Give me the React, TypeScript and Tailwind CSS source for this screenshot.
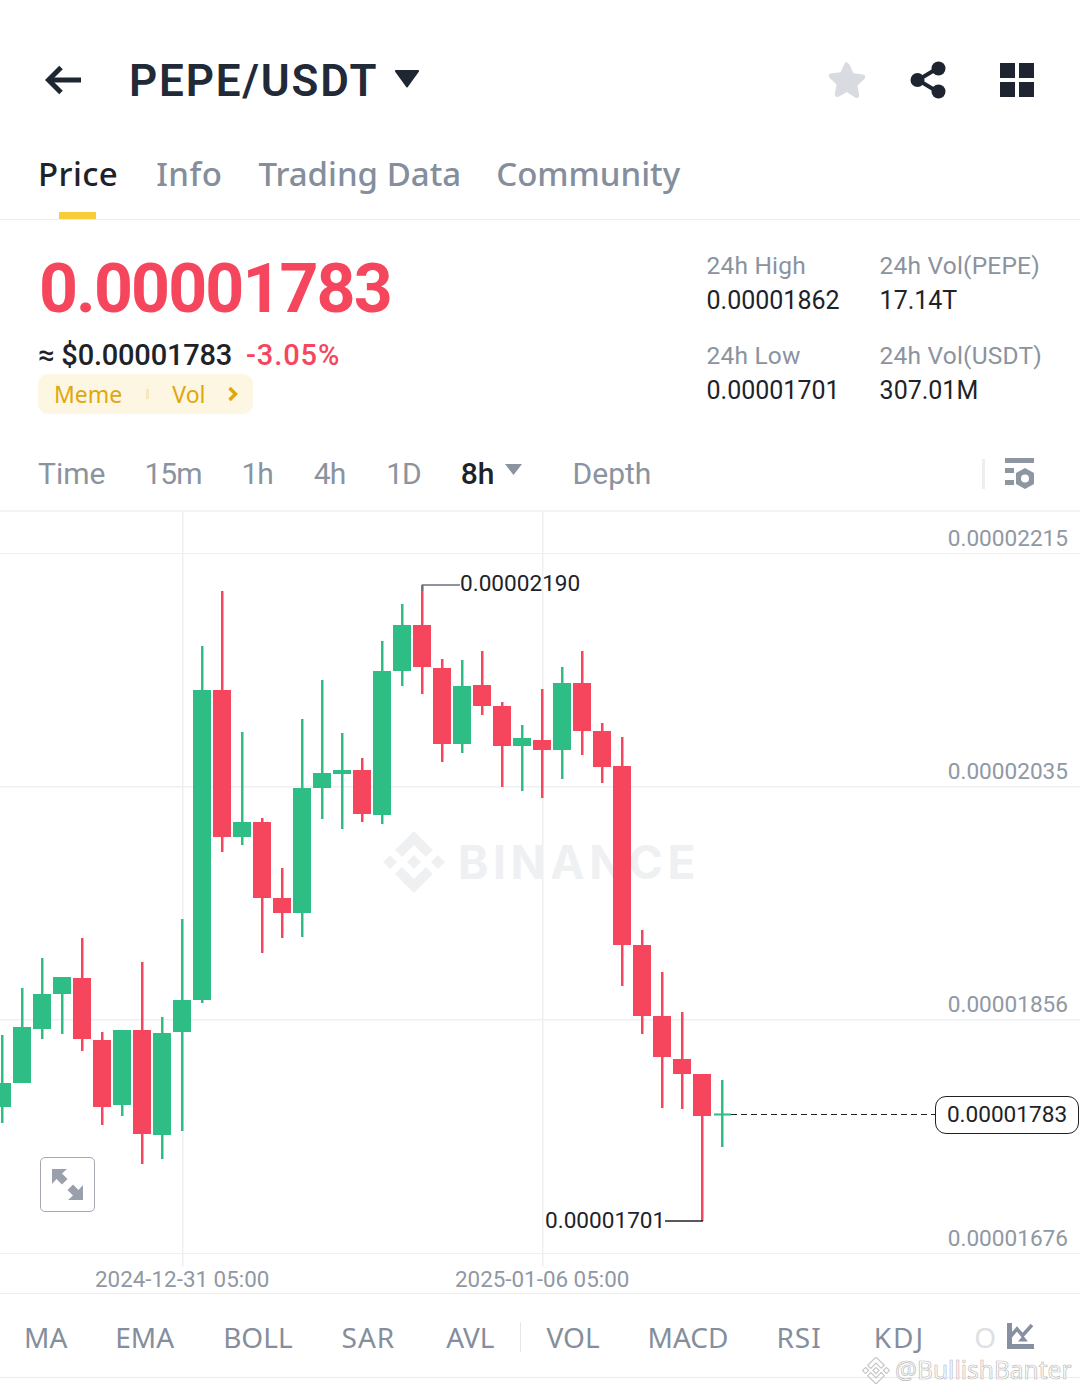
type Candle = [number, "g" | "r", number, number, number, number];

// x, colour, wick top, wick bottom, body top, body bottom (page pixels)
const candles: Candle[] = [
  [2, "g", 1035, 1123, 1083, 1107],
  [22, "g", 988, 1083, 1027, 1083],
  [42, "g", 958, 1039, 994, 1029],
  [62, "g", 977, 1034, 977, 994],
  [82, "r", 938, 1051, 978, 1039],
  [102, "r", 1032, 1125, 1040, 1107],
  [122, "g", 1030, 1116, 1030, 1105],
  [142, "r", 962, 1164, 1030, 1134],
  [162, "g", 1017, 1159, 1033, 1135],
  [182, "g", 919, 1131, 1000, 1032],
  [202, "g", 646, 1003, 690, 1000],
  [222, "r", 591, 852, 690, 837],
  [242, "g", 732, 845, 822, 837],
  [262, "r", 818, 953, 822, 898],
  [282, "r", 868, 938, 898, 913],
  [302, "g", 719, 937, 788, 913],
  [322, "g", 680, 819, 773, 788],
  [342, "g", 733, 829, 770, 774],
  [362, "r", 758, 822, 770, 814],
  [382, "g", 641, 824, 671, 815],
  [402, "g", 604, 686, 625, 671],
  [422, "r", 585, 694, 625, 667],
  [442, "r", 659, 762, 668, 744],
  [462, "g", 660, 753, 686, 744],
  [482, "r", 651, 715, 685, 706],
  [502, "r", 702, 787, 706, 746],
  [522, "g", 725, 791, 738, 746],
  [542, "r", 689, 798, 740, 750],
  [562, "g", 667, 779, 683, 750],
  [582, "r", 651, 755, 683, 731],
  [602, "r", 723, 783, 731, 767],
  [622, "r", 737, 986, 766, 945],
  [642, "r", 930, 1034, 945, 1016],
  [662, "r", 972, 1108, 1016, 1057],
  [682, "r", 1012, 1109, 1059, 1074],
  [702, "r", 1074, 1221, 1074, 1116],
];

const binancePath =
  "M16.624 13.9202l2.7175 2.7154-7.353 7.353-7.353-7.352 2.7175-2.7164 4.6355 4.6595 4.6356-4.6595zm4.6366-4.6366L24 12l-2.7154 2.7164L18.5682 12l2.6924-2.7164zm-9.272.001l2.7163 2.6914-2.7164 2.7174v-.001L9.2721 12l2.7164-2.7154zm-9.2722-.001L5.4088 12l-2.6914 2.6924L0 12l2.7164-2.7164zM11.9885.0115l7.353 7.329-2.7174 2.7154-4.6356-4.6356-4.6355 4.6595-2.7174-2.7154 7.353-7.353z";

const axisLabels = [
  { text: "0.00002215", top: "top-[13px]" },
  { text: "0.00002035", top: "top-[246px]" },
  { text: "0.00001856", top: "top-[479px]" },
  { text: "0.00001676", top: "top-[713px]" },
];

const Header = () => (
  <div className="flex h-[120px] items-center pt-[40px] pl-[45px]">
    <svg width="37" height="30" viewBox="0 0 37 30" fill="none" stroke="#1e2632" strokeWidth="5">
      <path d="M36 15H4" />
      <path d="M16 2.5 3.5 15 16 27.5" />
    </svg>
    <span className="mt-[2px] ml-[47px] font-['Roboto',sans-serif] text-[44px] leading-none font-semibold tracking-[1.8px] text-[#222a38]">PEPE/USDT</span>
    <svg className="mt-[-3px] ml-[17px]" width="24" height="18" viewBox="0 0 24 18" fill="#1e2632">
      <path d="M1 0h22a1 1 0 0 1 1 1.5L12.8 17a1 1 0 0 1-1.6 0L0 1.5A1 1 0 0 1 1 0z" />
    </svg>
    <div className="ml-auto flex items-center pr-[46px]">
      <svg width="38" height="38" viewBox="0 0 24 24" fill="#d8dbe0">
        <path d="M12 1.2c.7 0 1.2.4 1.5 1l2.6 5.6 6 .8c1.4.2 1.9 1.8.9 2.7l-4.4 4.2 1.1 6c.2 1.4-1.2 2.4-2.4 1.7L12 19.6l-5.3 2.9c-1.2.7-2.6-.3-2.4-1.7l1.1-6-4.4-4.2c-1-.9-.5-2.5.9-2.7l6-.8 2.6-5.6c.3-.6.8-1 1.5-1z" />
      </svg>
      <svg className="ml-[44px]" width="38" height="38" viewBox="0 0 38 38" fill="#1e2530" stroke="#1e2530">
        <path d="M28 7 8 19l20 12" fill="none" strokeWidth="4" />
        <circle cx="28.5" cy="7.5" r="7" stroke="none" />
        <circle cx="7.5" cy="19" r="7" stroke="none" />
        <circle cx="28.5" cy="30.5" r="7" stroke="none" />
      </svg>
      <div className="ml-[52px] grid grid-cols-[15px_15px] grid-rows-[15px_15px] gap-[4px]">
        <div className="bg-[#1e2530]" />
        <div className="bg-[#1e2530]" />
        <div className="bg-[#1e2530]" />
        <div className="bg-[#1e2530]" />
      </div>
    </div>
  </div>
);

const Tabs = () => (
  <div className="flex h-[100px] border-b border-[#eaecef] pl-[38px] font-['Noto_Sans',sans-serif] text-[33px] leading-none text-[#848e9c]">
    <div className="flex flex-col">
      <span className="mt-[37px] font-medium tracking-[0.4px] text-[#1e2329]">Price</span>
      <div className="mt-auto ml-[21px] h-[7px] w-[37px] bg-[#f7cd3a]" />
    </div>
    <span className="mt-[37px] ml-[38px] font-medium tracking-[0.5px]">Info</span>
    <span className="mt-[37px] ml-[36px] font-medium">Trading Data</span>
    <span className="mt-[37px] ml-[35px] font-medium">Community</span>
  </div>
);

const Stat = ({ label, value }: { label: string; value: string }) => (
  <div className="flex flex-col gap-[9px]">
    <span className="text-[24.5px] leading-[26px] tracking-[0.2px] text-[#8b939f]">{label}</span>
    <span className="text-[25px] leading-[26px] text-[#1e2329]">{value}</span>
  </div>
);

const Summary = () => (
  <div className="flex h-[220px] justify-between font-['Roboto',sans-serif]">
    <div className="flex flex-col pl-[38px]">
      <span className="mt-[32px] ml-[1px] text-[68px] leading-[74px] font-bold tracking-[-1.9px] text-[#f6465d]">0.00001783</span>
      <div className="mt-[11px] flex h-[36px] items-center gap-[14px] text-[29px] leading-none font-medium">
        <span className="tracking-[-0.2px] text-[#1e2329]">≈ $0.00001783</span>
        <span className="tracking-[0.9px] text-[#f6465d]">-3.05%</span>
      </div>
      <div className="mt-[1px] flex h-[40px] w-[215px] items-center rounded-[10px] bg-[#fdf6e3] pl-[16px] font-['Noto_Sans',sans-serif] text-[23px] text-[#e0a70c]">
        <span>Meme</span>
        <div className="ml-[24px] h-[10px] w-[3px] bg-[#f6e7bd]" />
        <span className="ml-[23px]">Vol</span>
        <svg className="ml-[21px]" width="12" height="16" viewBox="0 0 12 16" fill="none" stroke="#e0a70c" strokeWidth="3.5">
          <path d="M2.5 2 8.5 8l-6 6" />
        </svg>
      </div>
    </div>
    <div className="flex gap-[40px] pt-[33px] pr-[38px]">
      <div className="flex flex-col gap-[29px]">
        <Stat label="24h High" value="0.00001862" />
        <Stat label="24h Low" value="0.00001701" />
      </div>
      <div className="flex flex-col gap-[29px]">
        <Stat label="24h Vol(PEPE)" value="17.14T" />
        <Stat label="24h Vol(USDT)" value="307.01M" />
      </div>
    </div>
  </div>
);

const Periods = () => (
  <div className="flex h-[72px] items-center border-b-[2px] border-[#f3f4f5] pr-[45px] pb-[3px] pl-[38px] font-['Roboto',sans-serif] text-[30px] leading-none text-[#8b939f]">
    <span>Time</span>
    <span className="ml-[39px] tracking-[-1px]">15m</span>
    <span className="ml-[40px] tracking-[-1px]">1h</span>
    <span className="ml-[41px] tracking-[-1px]">4h</span>
    <span className="ml-[41px] tracking-[-1px]">1D</span>
    <span className="ml-[40px] font-medium text-[#1e2329]">8h</span>
    <svg className="mt-[-8px] ml-[10px]" width="17" height="11" viewBox="0 0 17 11" fill="#8b939f">
      <path d="M0 0h17L8.5 11z" />
    </svg>
    <span className="ml-[51px]">Depth</span>
    <div className="ml-auto h-[30px] w-[3px] bg-[#eceef0]" />
    <svg className="ml-[20px]" width="30" height="31" viewBox="0 0 30 31" fill="#8e96a2">
      <path d="M0 0h29v5H0zM0 10h9v5H0zM0 22h9v5H0z" />
      <path fillRule="evenodd" d="M20 10l9 5v11l-9 5-9-5V15zm0 6.5a4 4 0 1 0 0 8 4 4 0 0 0 0-8z" />
    </svg>
  </div>
);

const Chart = () => (
  <div className="relative h-[782px] border-b border-[#eaecef] font-['Roboto',sans-serif]">
    <div className="absolute top-[319px] left-[383px] flex items-center gap-[13px]">
      <svg width="62" height="62" viewBox="0 0 24 24" fill="#eef0f2">
        <path d={binancePath} />
      </svg>
      <span className="font-['Inter',sans-serif] text-[46px] leading-none font-bold tracking-[4.6px] text-[#eef0f2]">BINANCE</span>
    </div>
    <svg className="absolute inset-0" width="1080" height="781" viewBox="0 512 1080 781">
      <g fill="#eef0f2">
        <rect x="0" y="553" width="1080" height="1" />
        <rect x="0" y="786" width="1080" height="1.5" />
        <rect x="0" y="1019" width="1080" height="1.5" />
        <rect x="0" y="1253" width="1080" height="1" />
        <rect x="182" y="512" width="1.5" height="755" />
        <rect x="542" y="512" width="1.5" height="755" />
      </g>
      {candles.map(([x, c, wt, wb, bt, bb]) => (
        <g key={x} fill={c === "g" ? "#2ebd85" : "#f6465d"}>
          <rect x={x - 1} y={wt} width="2.5" height={wb - wt} />
          <rect x={x - 9} y={bt} width="18" height={bb - bt} />
        </g>
      ))}
      <rect x="721" y="1080" width="2.5" height="67" fill="#2ebd85" />
      <rect x="714" y="1113.5" width="17" height="2" fill="#2ebd85" />
      <path d="M731 1114.5H935" stroke="#1e2329" strokeWidth="1.2" strokeDasharray="6 4" />
      <path d="M422.5 591V585H460" fill="none" stroke="#6c727c" strokeWidth="1.5" />
      <path d="M665 1221H703" fill="none" stroke="#1e2329" strokeWidth="1.5" />
    </svg>
    {axisLabels.map((label) => (
      <span key={label.text} className={`absolute right-[12px] ${label.top} text-[22.6px] leading-[27px] text-[#8f98a4]`}>
        {label.text}
      </span>
    ))}
    <span className="absolute top-[58px] left-[460px] text-[22.6px] leading-[27px] text-[#1e2329]">0.00002190</span>
    <span className="absolute top-[695px] left-[545px] text-[22.6px] leading-[27px] text-[#1e2329]">0.00001701</span>
    <div className="absolute top-[584px] left-[935px] flex h-[38px] w-[144px] items-center justify-center rounded-[11px] border border-[#1e2329] bg-white text-[22.6px] leading-none text-[#1e2329]">
      0.00001783
    </div>
    <span className="absolute top-[754px] left-[95px] text-[22.4px] leading-[27px] text-[#8f98a4]">2024-12-31 05:00</span>
    <span className="absolute top-[754px] left-[455px] text-[22.4px] leading-[27px] text-[#8f98a4]">2025-01-06 05:00</span>
    <div className="absolute top-[645px] left-[40px] flex h-[55px] w-[55px] items-center justify-center rounded-[5px] border-[1.5px] border-[#a3a8b3] bg-white">
      <svg width="33" height="33" viewBox="0 0 33 33" fill="#9aa0ab">
        <path d="M1 1h15l-5 4.5 5.5 5.5-5.5 5.5-5.5-5.5L1 16z" />
        <path d="M32 32H17l5-4.5-5.5-5.5 5.5-5.5 5.5 5.5 4.5-5z" />
      </svg>
    </div>
  </div>
);

const Indicators = () => (
  <div className="relative flex h-[84px] items-center border-b border-[#eaecef] pt-[3px] pl-[24px] font-['Noto_Sans',sans-serif] text-[28px] leading-none text-[#848e9c]">
    <span>MA</span>
    <span className="ml-[48px]">EMA</span>
    <span className="ml-[49px]">BOLL</span>
    <span className="ml-[49px] tracking-[1px]">SAR</span>
    <span className="ml-[51px]">AVL</span>
    <div className="ml-[25px] h-[30px] w-[1px] bg-[#e4e6ea]" />
    <span className="ml-[26px]">VOL</span>
    <span className="ml-[48px]">MACD</span>
    <span className="ml-[48px] tracking-[1px]">RSI</span>
    <span className="ml-[52px] tracking-[2px]">KDJ</span>
    <span className="ml-[49px] text-[#dde0e4]">O</span>
    <svg className="absolute top-[29px] left-[1007px]" width="27" height="27" viewBox="0 0 27 27" fill="#8690a0">
      <path d="M0 0h5v21h22v5H0z" />
      <path d="M3 14 10 6l5.5 6.5L25 2" fill="none" stroke="#8690a0" strokeWidth="3.5" />
      <path d="M11 18.5l5-6 5 6z" />
    </svg>
  </div>
);

export default function App() {
  return (
    <div className="relative h-[1392px] w-[1080px] overflow-hidden bg-white">
      <Header />
      <Tabs />
      <Summary />
      <Periods />
      <Chart />
      <Indicators />
      <div className="absolute top-[1356px] left-[862px] flex items-center gap-[5px]">
        <svg width="28" height="27" viewBox="0 0 24 24" fill="none" stroke="#c4c4c4" strokeWidth="1">
          <path d={binancePath} />
        </svg>
        <span className="font-['Noto_Sans',sans-serif] text-[24.5px] leading-[28px] text-white [-webkit-text-stroke:0.7px_#bcbcbc]">@BullishBanter</span>
      </div>
    </div>
  );
}
